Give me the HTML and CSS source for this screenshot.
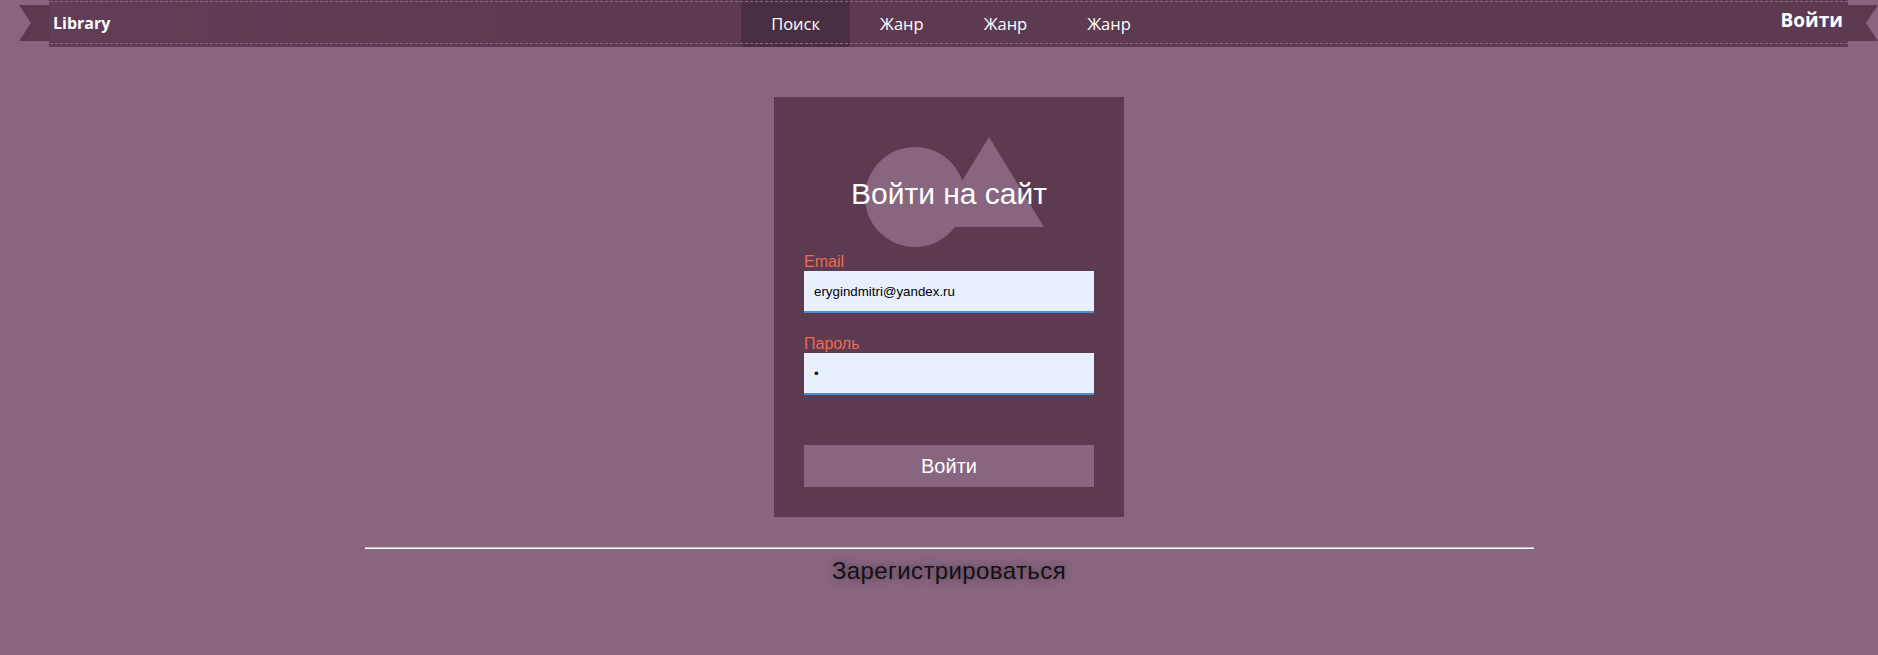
FILE: index.html
```html
<!DOCTYPE html>
<html lang="ru">
<head>
<meta charset="utf-8">
<title>Library</title>
<link rel="stylesheet" href="styles.css">
</head>
<body>
<header class="header">
  <div class="tail tail-left"></div>
  <div class="bar">
    <a class="brand" href="#">Library</a>
    <nav class="nav">
      <a class="nav-item active" href="#">Поиск</a>
      <a class="nav-item" href="#">Жанр</a>
      <a class="nav-item" href="#">Жанр</a>
      <a class="nav-item" href="#">Жанр</a>
    </nav>
    <div class="bar-right"><a class="login-link" href="#">Войти</a></div>
  </div>
  <div class="tail tail-right"></div>
</header>
<main class="main">
  <form class="card">
    <div class="card-head">
      <span class="shape circle"></span>
      <span class="shape triangle"></span>
      <h1 class="title">Войти на сайт</h1>
    </div>
    <label class="label" for="email">Email</label>
    <input class="input" id="email" type="text" value="erygindmitri@yandex.ru">
    <label class="label label-gap" for="pass">Пароль</label>
    <input class="input" id="pass" type="password" value="1">
    <button class="submit" type="button">Войти</button>
  </form>
  <hr class="divider">
  <a class="register" href="#">Зарегистрироваться</a>
</main>
</body>
</html>
```
FILE: styles.css
```css
html, body {
  margin: 0;
  padding: 0;
}
body {
  background: #896680;
  font-family: "Liberation Sans", Arial, sans-serif;
  height: 655px;
  overflow: hidden;
}
a { text-decoration: none; }

.header {
  display: flex;
  align-items: flex-start;
  padding-left: 19px;
}
.tail {
  width: 30px;
  height: 36px;
  margin-top: 5px;
  background: #5b3a50;
  flex: none;
}
.tail-left {
  clip-path: polygon(0 0, 100% 0, 100% 100%, 0 100%, 40% 50%);
}
.tail-right {
  clip-path: polygon(0 0, 100% 0, 60% 50%, 100% 100%, 0 100%);
}
.bar {
  position: relative;
  flex: 1;
  height: 47px;
  background: linear-gradient(90deg, #603e55 0%, #5c3a50 30%, #5c3a50 100%);
  display: grid;
  grid-template-columns: 1fr auto 1fr;
  align-items: stretch;
  font-family: "Open Sans", "Noto Sans", sans-serif;
}
.bar::before,
.bar::after {
  content: "";
  position: absolute;
  left: 1px;
  right: 0;
  height: 0;
  border-top: 1px dashed #8c6b82;
  pointer-events: none;
}
.bar::before { top: 1px; }
.bar::after { top: 43px; }
.brand {
  color: #fff;
  font-weight: 700;
  font-size: 16px;
  line-height: 47px;
  padding-left: 4px;
  justify-self: start;
}
.nav {
  display: flex;
  margin-left: 5px;
}
.nav-item {
  color: #fff;
  font-size: 16.5px;
  line-height: 47px;
  padding: 0 30px;
}
.nav-item.active {
  background: #4a2e42;
}
.bar-right {
  display: flex;
  justify-content: flex-end;
}
.login-link {
  color: #fff;
  font-weight: 700;
  font-size: 19px;
  line-height: 41px;
  padding-right: 5px;
}

.main {
  padding-left: 20px;
  display: flex;
  flex-direction: column;
  align-items: center;
}
.card {
  position: relative;
  width: 290px;
  margin-top: 50px;
  padding: 30px;
  background: #5c3a50;
  display: flex;
  flex-direction: column;
}
.card-head {
  height: 126px;
}
.shape {
  position: absolute;
  background: #896680;
}
.circle {
  left: 91px;
  top: 50px;
  width: 100px;
  height: 100px;
  border-radius: 50%;
}
.triangle {
  left: 160px;
  top: 40px;
  width: 110px;
  height: 90px;
  clip-path: polygon(50% 0, 100% 100%, 0 100%);
}
.title {
  position: relative;
  margin: 0;
  padding-top: 50px;
  text-align: center;
  color: #fff;
  font-weight: 400;
  font-size: 30px;
  line-height: 34px;
}
.label {
  display: block;
  color: #ef6a50;
  font-size: 16px;
  line-height: 18px;
}
.label-gap {
  margin-top: 22px;
}
.input {
  box-sizing: border-box;
  width: 290px;
  height: 42px;
  margin: 0;
  padding: 0 10px;
  border: none;
  border-bottom: 2px solid #4a8edb;
  background: #e8f0fe;
  color: #000;
  font-family: "Liberation Sans", Arial, sans-serif;
  font-size: 13.33px;
  outline: none;
}
.submit {
  margin-top: 50px;
  height: 42px;
  border: none;
  background: #896680;
  color: #fff;
  font-family: "Liberation Sans", Arial, sans-serif;
  font-size: 20px;
  padding: 0;
}
.divider {
  width: 1169px;
  margin: 30px 0 0;
  height: 0;
  border: none;
  border-top: 1px solid #c9bcc5;
  border-bottom: 1px solid #ffffff;
}
.register {
  margin-top: 8px;
  color: #141014;
  font-size: 24px;
  line-height: 28px;
  letter-spacing: 0.4px;
  text-shadow: 0 0 10px rgba(0, 0, 0, 0.45);
}
```
